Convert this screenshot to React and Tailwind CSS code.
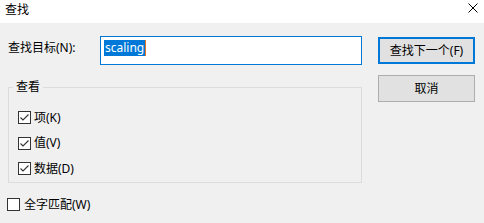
export default function App() {
  return (
    <div
      className="w-[484px] h-[223px] bg-[#f0f0f0] text-black text-[12px] leading-[16px] overflow-hidden select-none"
      style={{ fontFamily: '"Noto Sans", "Noto Sans CJK SC", sans-serif' }}
    >
      <TitleBar />
      <div className="flex">
        <div className="w-[362px] pl-[8px] pt-[13px]">
          <div className="flex items-start">
            <div className="w-[92px] pt-[4px]">查找目标(N):</div>
            <div className="w-[262px] h-[29px] border border-[#0078d7] bg-white pl-[3px] pt-[3px] flex items-start">
              <span className="bg-[#0078d7] text-white h-[16px] leading-[16px] px-[1px]">scaling</span>
              <span className="w-[1px] h-[16px] bg-[#e8731c]" />
            </div>
          </div>
          <fieldset className="mt-[14px] border border-[#dcdcdc] pl-[4px] pr-0 pb-[7px] pt-[16px]">
            <legend className="px-[3px] leading-[16px]">查看</legend>
            <div className="pl-[5px] flex flex-col gap-[12.5px]">
              <Check label="项(K)" checked />
              <Check label="值(V)" checked />
              <Check label="数据(D)" checked />
            </div>
          </fieldset>
          <div className="mt-[15px] -ml-[1px]">
            <Check label="全字匹配(W)" gap="gap-[4px]" />
          </div>
        </div>
        <div className="ml-[16px] pt-[14px] flex flex-col gap-[11px]">
          <button className="w-[97px] h-[27px] border-2 border-[#0078d7] bg-[#e1e1e1] flex items-center justify-center">
            查找下一个(F)
          </button>
          <button className="w-[97px] h-[27px] border border-[#adadad] bg-[#e1e1e1] flex items-center justify-center">
            取消
          </button>
        </div>
      </div>
    </div>
  );
}

function TitleBar() {
  return (
    <div className="h-[23px] bg-white flex items-start justify-between pl-[5px] pr-[6px] pt-[2px]">
      <span>查找</span>
      <svg width="10" height="10" viewBox="0 0 10 10" className="mt-[1px]">
        <path d="M0.5 0.5 L9.5 9.5 M9.5 0.5 L0.5 9.5" stroke="#000" strokeWidth="1" fill="none" />
      </svg>
    </div>
  );
}

function Check({ label, checked, gap = "gap-[3px]" }) {
  return (
    <div className={`flex items-center h-[13px] ${gap}`}>
      <span className="w-[13px] h-[13px] border border-[#333] bg-white flex items-center justify-center shrink-0">
        {checked ? (
          <svg width="11" height="11" viewBox="0 0 11 11">
            <path d="M1.5 5.5 L4 8 L9.5 2.5" stroke="#333" strokeWidth="1.1" fill="none" />
          </svg>
        ) : null}
      </span>
      <span className="leading-[16px]">{label}</span>
    </div>
  );
}
